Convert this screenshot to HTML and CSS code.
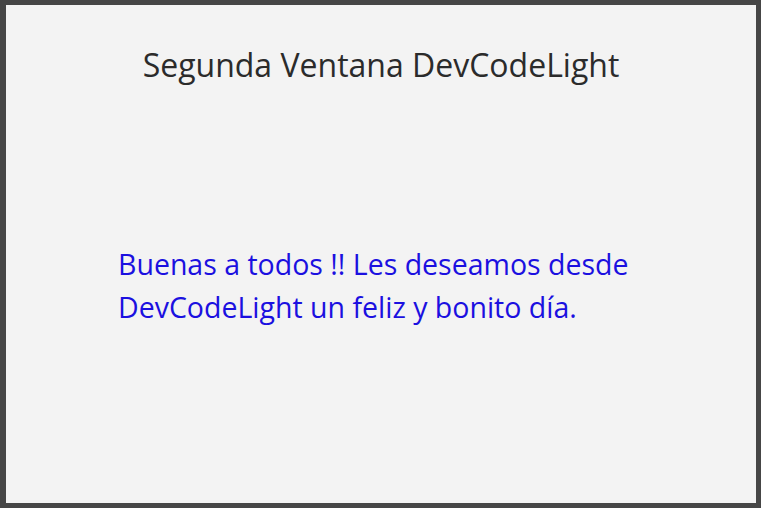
FILE: index.html
```html
<!DOCTYPE html>
<html>
<head>
  <meta charset="UTF-8" />
  <title>Segunda Ventana DevCodeLight</title>
  <link rel="stylesheet" href="styles.css">
</head>
<body>
  <div class="window">
    <h1 class="title">Segunda Ventana DevCodeLight</h1>
    <p class="message">Buenas a todos !! Les deseamos desde DevCodeLight un feliz y bonito día.</p>
  </div>
</body>
</html>
```

FILE: styles.css
```css
html, body {
  margin: 0;
  height: 100%;
}
body {
  font-family: "Open Sans", sans-serif;
  background: #464646;
}
.window {
  box-sizing: border-box;
  height: 508px;
  width: 761px;
  border-style: solid;
  border-color: #464646;
  border-width: 5px 5px 5px 6px;
  background: #f3f3f3;
}
.title {
  margin: 0;
  padding-top: 38px;
  text-align: center;
  font-size: 32px;
  font-weight: normal;
  color: #2b2b2b;
}
.message {
  margin: 157px 0 0 112px;
  width: 540px;
  font-size: 28.5px;
  line-height: 43px;
  color: #1b10e0;
}
```
